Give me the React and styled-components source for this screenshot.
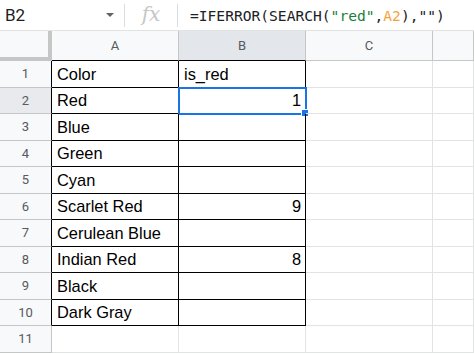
import styled, { createGlobalStyle } from 'styled-components';

const GlobalStyle = createGlobalStyle`
  html, body {
    margin: 0;
    padding: 0;
    background: #ffffff;
    overflow: hidden;
  }
`;

const Page = styled.div`
  width: 474px;
  height: 354px;
  overflow: hidden;
  background: #ffffff;
`;

const FormulaBar = styled.div`
  display: flex;
  align-items: center;
  height: 30px;
  border-bottom: 1px solid #e1e3e1;
`;

const NameBox = styled.div`
  display: flex;
  align-items: center;
  width: 124px;
  height: 100%;
  padding: 0 10px 0 5px;
  box-sizing: border-box;
  font-family: Roboto, 'Liberation Sans', sans-serif;
  font-size: 17px;
  color: #202124;
`;

const NameText = styled.span`
  flex: 1;
`;

const Caret = styled.span`
  width: 0;
  height: 0;
  border-left: 4px solid transparent;
  border-right: 4px solid transparent;
  border-top: 4px solid #5f6368;
`;

const Divider = styled.div`
  width: 1px;
  height: 23px;
  background: #dadce0;
`;

const FxLabel = styled.div`
  width: 52px;
  text-align: center;
  font-family: 'DejaVu Serif', 'Liberation Serif', serif;
  font-style: italic;
  font-size: 20px;
  color: #c4c7c5;
  padding-bottom: 2px;
`;

const Formula = styled.div`
  padding-left: 12px;
  font-family: 'DejaVu Sans Mono', 'Liberation Mono', monospace;
  font-size: 14.6px;
  color: #202124;
  white-space: nowrap;
`;

const Token = styled.span`
  color: ${({ $kind }) =>
    $kind === 'string' ? '#188038' : $kind === 'ref' ? '#f4a53a' : '#202124'};
`;

const Grid = styled.div`
  display: grid;
  grid-template-columns: 52px 127px 127px 127px 1fr;
  grid-template-rows: 30px repeat(11, 26.5px);
`;

const Corner = styled.div`
  background: #f8f9fa;
  border-right: 4px solid #c4c7c5;
  border-bottom: 4px solid #c4c7c5;
`;

const ColHead = styled.div`
  display: flex;
  align-items: center;
  justify-content: center;
  background: ${({ $active }) => ($active ? '#e3e6ea' : '#f8f9fa')};
  border-right: 1px solid #c4c7c5;
  border-bottom: 1px solid ${({ $boxed }) => ($boxed ? '#000000' : '#c4c7c5')};
  font-family: Roboto, 'Liberation Sans', sans-serif;
  font-size: 13px;
  color: #575a5e;
`;

const RowHead = styled.div`
  display: flex;
  align-items: center;
  justify-content: center;
  background: ${({ $active }) => ($active ? '#e8eaed' : '#f8f9fa')};
  border-right: 1px solid ${({ $boxed }) => ($boxed ? '#000000' : '#c4c7c5')};
  border-bottom: 1px solid #c4c7c5;
  font-family: Roboto, 'Liberation Sans', sans-serif;
  font-size: 13px;
  color: #575a5e;
`;

const Cell = styled.div`
  position: relative;
  display: flex;
  align-items: flex-end;
  justify-content: ${({ $number }) => ($number ? 'flex-end' : 'flex-start')};
  padding: 0 4px 3px 5px;
  border-right: 1px solid ${({ $boxed }) => ($boxed ? '#000000' : '#e2e3e3')};
  border-bottom: 1px solid ${({ $boxed }) => ($boxed ? '#000000' : '#e2e3e3')};
  font-family: 'Liberation Sans', Arial, sans-serif;
  font-size: 16.4px;
  color: #000000;
  white-space: nowrap;
`;

const Selection = styled.div`
  position: absolute;
  top: -1px;
  left: -1px;
  right: -2px;
  bottom: -2px;
  border: 2px solid #1a73e8;
  pointer-events: none;
`;

const Handle = styled.div`
  position: absolute;
  right: -4px;
  bottom: -4px;
  width: 6px;
  height: 6px;
  background: #1a73e8;
  border: 1px solid #ffffff;
`;

const rows = [
  ['Color', 'is_red'],
  ['Red', '1'],
  ['Blue', ''],
  ['Green', ''],
  ['Cyan', ''],
  ['Scarlet Red', '9'],
  ['Cerulean Blue', ''],
  ['Indian Red', '8'],
  ['Black', ''],
  ['Dark Gray', ''],
  null,
];

const tokens = [
  ['=IFERROR(SEARCH(', 'plain'],
  ['"red"', 'string'],
  [',', 'plain'],
  ['A2', 'ref'],
  ['),', 'plain'],
  ['""', 'plain'],
  [')', 'plain'],
];

export default function App() {
  return (
    <Page>
      <GlobalStyle />
      <FormulaBar>
        <NameBox>
          <NameText>B2</NameText>
          <Caret />
        </NameBox>
        <Divider />
        <FxLabel>fx</FxLabel>
        <Divider />
        <Formula>
          {tokens.map(([text, kind], i) => (
            <Token key={i} $kind={kind}>
              {text}
            </Token>
          ))}
        </Formula>
      </FormulaBar>
      <Grid>
        <Corner />
        <ColHead $boxed>A</ColHead>
        <ColHead $boxed $active>
          B
        </ColHead>
        <ColHead>C</ColHead>
        <ColHead />
        {rows.map((row, i) => {
          const boxed = row !== null;
          const selected = i === 1;
          return [
            <RowHead key={`h${i}`} $boxed={boxed} $active={selected}>
              {i + 1}
            </RowHead>,
            <Cell key={`a${i}`} $boxed={boxed}>
              {row ? row[0] : ''}
            </Cell>,
            <Cell key={`b${i}`} $boxed={boxed} $number={row && /^\d+$/.test(row[1])}>
              {row ? row[1] : ''}
              {selected && (
                <Selection>
                  <Handle />
                </Selection>
              )}
            </Cell>,
            <Cell key={`c${i}`} />,
            <Cell key={`d${i}`} />,
          ];
        })}
      </Grid>
    </Page>
  );
}
